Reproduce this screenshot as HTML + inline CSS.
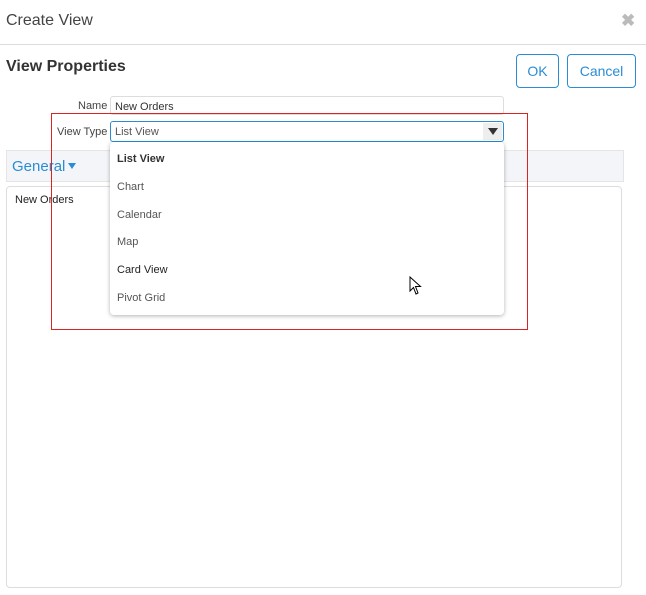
<!DOCTYPE html>
<html><head><meta charset="utf-8"><style>
*{margin:0;padding:0;box-sizing:border-box}
body{width:646px;height:595px;background:#fff;font-family:"Liberation Sans",sans-serif;position:relative;overflow:hidden;color:#333}
.a{position:absolute}
</style></head><body>
<div class="a" style="left:6px;top:12px;font-size:16px;color:#444">Create View</div>
<div class="a" style="left:621px;top:11px;font-size:17px;color:#bbb;font-weight:bold">✖</div>
<div class="a" style="left:0;top:44px;width:646px;height:1px;background:#ddd"></div>
<div class="a" style="left:6px;top:58px;font-size:16px;font-weight:bold;color:#333">View Properties</div>
<div class="a" style="left:516px;top:54px;width:43px;height:34px;border:1px solid #2a8dd4;border-radius:4px;color:#2a8dd4;font-size:14px;text-align:center;line-height:32px">OK</div>
<div class="a" style="left:567px;top:54px;width:69px;height:34px;border:1px solid #2a8dd4;border-radius:4px;color:#2a8dd4;font-size:14px;text-align:center;line-height:32px">Cancel</div>
<div class="a" style="left:78px;top:100px;font-size:11px;color:#444">Name</div>
<div class="a" style="left:110px;top:96px;width:394px;height:19px;border:1px solid #ddd;border-radius:3px;font-size:11px;padding:4px 0 0 4px;color:#333">New Orders</div>
<div class="a" style="left:57px;top:126px;font-size:11px;color:#444">View Type</div>
<div class="a" style="left:110px;top:121px;width:394px;height:21px;border:1px solid #2a8dd4;border-radius:3px;font-size:11px;padding:4px 0 0 4px;color:#555">List View</div>
<div class="a" style="left:483px;top:123px;width:19px;height:17px;background:#eee"></div>
<div class="a" style="left:488px;top:128px;width:0;height:0;border-left:5px solid transparent;border-right:5px solid transparent;border-top:7px solid #333"></div>
<div class="a" style="left:6px;top:150px;width:618px;height:32px;background:#f3f5f8;border:1px solid #e5e5e5"></div>
<div class="a" style="left:12px;top:158px;font-size:15px;color:#2a8dd4">General</div>
<div class="a" style="left:68px;top:163px;width:0;height:0;border-left:4px solid transparent;border-right:4px solid transparent;border-top:6px solid #2a8dd4"></div>
<div class="a" style="left:6px;top:186px;width:616px;height:402px;border:1px solid #ddd;border-radius:4px"></div>
<div class="a" style="left:15px;top:194px;font-size:11px;color:#222">New Orders</div>
<div class="a" style="left:110px;top:142px;width:394px;height:173px;background:#fff;border-radius:4px;box-shadow:0 1px 4px rgba(0,0,0,.3)"></div>
<div class="a" style="left:117px;top:153px;font-size:11px;font-weight:bold;color:#333">List View</div>
<div class="a" style="left:117px;top:181px;font-size:11px;color:#555">Chart</div>
<div class="a" style="left:117px;top:209px;font-size:11px;color:#555">Calendar</div>
<div class="a" style="left:117px;top:236px;font-size:11px;color:#555">Map</div>
<div class="a" style="left:117px;top:264px;font-size:11px;color:#222">Card View</div>
<div class="a" style="left:117px;top:292px;font-size:11px;color:#555">Pivot Grid</div>
<div class="a" style="left:51px;top:113px;width:477px;height:217px;border:1px solid #d22"></div>
<svg class="a" style="left:409px;top:276px" width="14" height="20" viewBox="0 0 14 20"><path d="M1 1 L1 15 L4.5 11.5 L7 18 L9 17 L6.5 10.5 L11.5 10.5 Z" fill="#fff" stroke="#000" stroke-width="1"/></svg>
</body></html>
